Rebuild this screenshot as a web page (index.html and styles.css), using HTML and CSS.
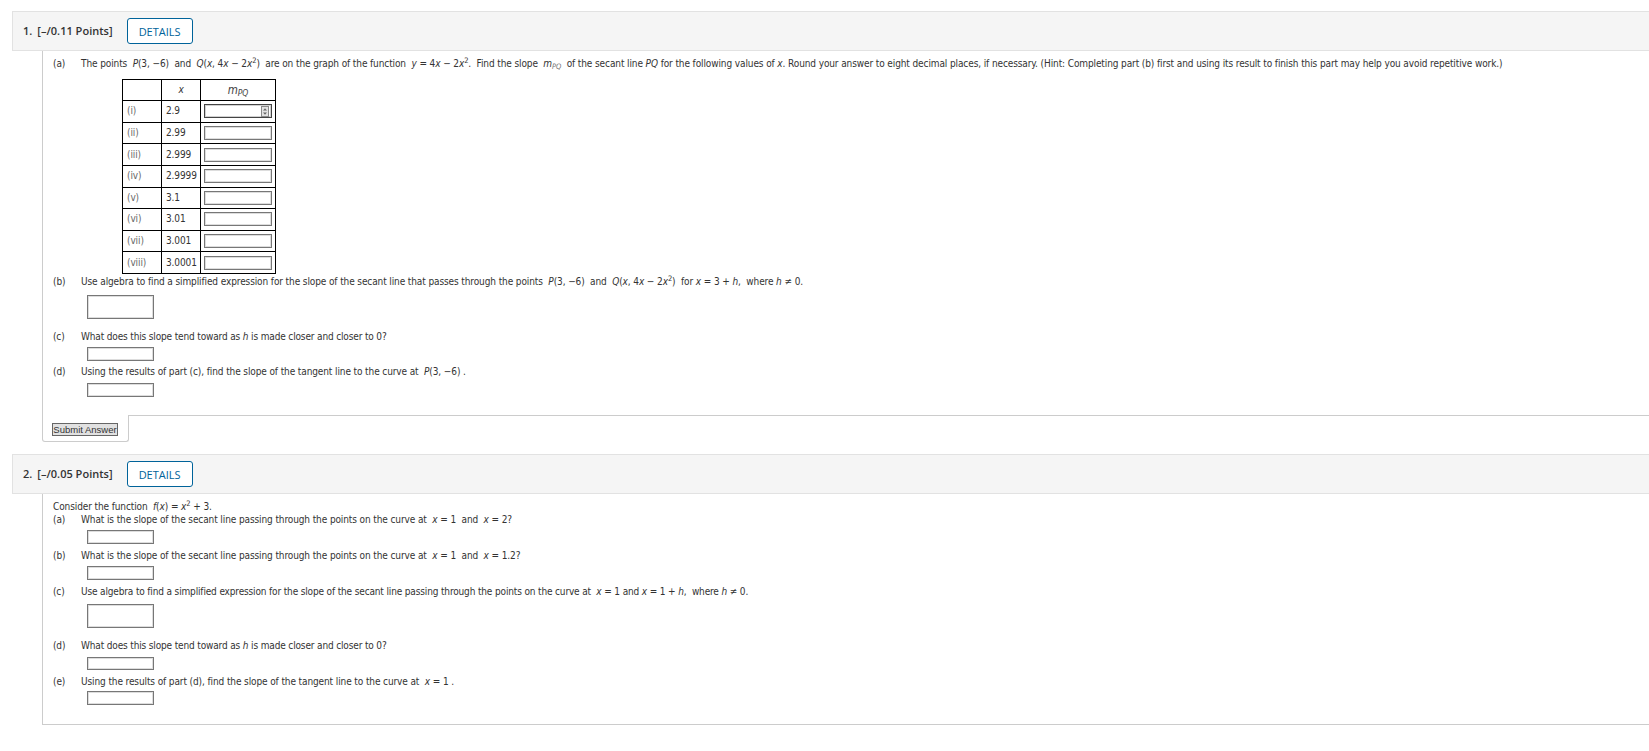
FILE: index.html
```html
<!DOCTYPE html>
<html lang="en">
<head>
<meta charset="utf-8">
<title>Questions</title>
<link rel="stylesheet" href="styles.css">
</head>
<body>
<section class="question q1">
  <header class="qhead"><span class="qnum">1.</span><span class="qpts">[–/0.11 Points]</span><button class="details">DETAILS</button></header>
  <div class="qbody">
    <div class="part"><span class="lab">(a)</span><span class="txt">The points&nbsp; <i>P</i>(3, −6)&nbsp; and&nbsp; <i>Q</i>(<i>x</i>, 4<i>x</i> − 2<i>x</i><sup>2</sup>)&nbsp; are on the graph of the function&nbsp; <i>y</i> = 4<i>x</i> − 2<i>x</i><sup>2</sup>.&nbsp; Find the slope&nbsp; <i>m</i><sub><i>PQ</i></sub>&nbsp; of the secant line <i>PQ</i> for the following values of <i>x</i>. Round your answer to eight decimal places, if necessary. (Hint: Completing part (b) first and using its result to finish this part may help you avoid repetitive work.)</span></div>
    <table class="vals">
      <tr><th class="c1"></th><th class="c2"><i>x</i></th><th class="c3"><i>m</i><sub><i>PQ</i></sub></th></tr>
      <tr><td class="rl">(i)</td><td>2.9</td><td><span class="spin"><input class="cell focus" type="text"><svg class="spin-ic" width="8" height="11" viewBox="0 0 8 11"><rect x=".5" y=".5" width="7" height="10" fill="#e4e4e4" stroke="#8a8a8a"/><path d="M4 2.2 6 4.6H2zM2 6.4h4L4 8.8z" fill="#666"/></svg></span></td></tr>
      <tr><td class="rl">(ii)</td><td>2.99</td><td><input class="cell" type="text"></td></tr>
      <tr><td class="rl">(iii)</td><td>2.999</td><td><input class="cell" type="text"></td></tr>
      <tr><td class="rl">(iv)</td><td>2.9999</td><td><input class="cell" type="text"></td></tr>
      <tr><td class="rl">(v)</td><td>3.1</td><td><input class="cell" type="text"></td></tr>
      <tr><td class="rl">(vi)</td><td>3.01</td><td><input class="cell" type="text"></td></tr>
      <tr><td class="rl">(vii)</td><td>3.001</td><td><input class="cell" type="text"></td></tr>
      <tr><td class="rl">(viii)</td><td>3.0001</td><td><input class="cell" type="text"></td></tr>
    </table>
    <div class="part"><span class="lab">(b)</span><span class="txt">Use algebra to find a simplified expression for the slope of the secant line that passes through the points&nbsp; <i>P</i>(3, −6)&nbsp; and&nbsp; <i>Q</i>(<i>x</i>, 4<i>x</i> − 2<i>x</i><sup>2</sup>)&nbsp; for <i>x</i> = 3 + <i>h</i>,&nbsp; where <i>h</i> ≠ 0.</span></div>
    <input class="ans tall a1b" type="text">
    <div class="part p1c tight"><span class="lab">(c)</span><span class="txt">What does this slope tend toward as <i>h</i> is made closer and closer to 0?</span></div>
    <input class="ans a1c" type="text">
    <div class="part p1d"><span class="lab">(d)</span><span class="txt">Using the results of part (c), find the slope of the tangent line to the curve at&nbsp; <i>P</i>(3, −6) .</span></div>
    <input class="ans a1d" type="text">
  </div>
  <div class="qfoot">
    <div class="submit-tab"><button class="submit">Submit Answer</button></div>
    <div class="foot-fill"></div>
  </div>
</section>
<section class="question q2">
  <header class="qhead"><span class="qnum">2.</span><span class="qpts">[–/0.05 Points]</span><button class="details">DETAILS</button></header>
  <div class="qbody closed">
    <div class="intro">Consider the function&nbsp; <i>f</i>(<i>x</i>) = <i>x</i><sup>2</sup> + 3.</div>
    <div class="part"><span class="lab">(a)</span><span class="txt">What is the slope of the secant line passing through the points on the curve at&nbsp; <i>x</i> = 1&nbsp; and&nbsp; <i>x</i> = 2?</span></div>
    <input class="ans gap4" type="text">
    <div class="part gap4"><span class="lab">(b)</span><span class="txt">What is the slope of the secant line passing through the points on the curve at&nbsp; <i>x</i> = 1&nbsp; and&nbsp; <i>x</i> = 1.2?</span></div>
    <input class="ans gap4" type="text">
    <div class="part gap4 tight"><span class="lab">(c)</span><span class="txt">Use algebra to find a simplified expression for the slope of the secant line passing through the points on the curve at&nbsp; <i>x</i> = 1 and <i>x</i> = 1 + <i>h</i>,&nbsp; where <i>h</i> ≠ 0.</span></div>
    <input class="ans tall a2c" type="text">
    <div class="part p1c tight"><span class="lab">(d)</span><span class="txt">What does this slope tend toward as <i>h</i> is made closer and closer to 0?</span></div>
    <input class="ans a2d" type="text">
    <div class="part gap4"><span class="lab">(e)</span><span class="txt">Using the results of part (d), find the slope of the tangent line to the curve at&nbsp; <i>x</i> = 1 .</span></div>
    <input class="ans a2e" type="text">
  </div>
</section>
</body>
</html>
```
FILE: styles.css
```css
html, body { margin: 0; padding: 0; background: #fff; overflow: hidden; }
body {
  padding: 11px 0 0 12px;
  font-family: "DejaVu Sans Condensed", "DejaVu Sans", sans-serif;
  font-stretch: condensed;
  font-size: 10px;
  letter-spacing: -0.11px;
  line-height: 14px;
  color: #333;
}
.question { display: block; }
.q2 { margin-top: 12px; }
.qhead {
  display: flex;
  align-items: center;
  box-sizing: border-box;
  height: 40px;
  padding-left: 10px;
  background: #f5f5f5;
  border: 1px solid #e2e2e2;
  border-right: 0;
  font-family: "Open Sans", sans-serif;
  font-stretch: normal;
  letter-spacing: 0;
  font-size: 11px;
  font-weight: 600;
  color: #333;
}
.qpts { margin-left: 5px; letter-spacing: 0.02px; }
.details {
  box-sizing: border-box;
  width: 66px;
  height: 26px;
  margin-left: 14px;
  padding: 0;
  background: #fff;
  border: 1px solid #00639a;
  border-radius: 3px;
  font-family: "Open Sans", sans-serif;
  font-size: 11px;
  font-weight: 400;
  color: #00639a;
}
.qbody {
  margin-left: 30px;
  padding: 5px 0 18px 10px;
  border-left: 1px solid #ccc;
}
.qbody.closed {
  padding-bottom: 19px;
  border-bottom: 1px solid #ccc;
}
.part {
  display: flex;
  white-space: nowrap;
  padding-top: 1px;
  margin-bottom: -1px;
}
.tight { letter-spacing: -0.15px; }
.lab { flex: 0 0 28px; width: 28px; }
i { font-style: italic; }
sup, sub { font-size: 7.5px; line-height: 0; }
sup { vertical-align: 4px; }
sub { vertical-align: -2px; color: #777; }
.vals {
  margin: 9px 0 0 69px;
  border-collapse: collapse;
  border: 1px solid #000;
}
.vals th, .vals td {
  box-sizing: border-box;
  padding: 0 0 0 4px;
  border: 1px solid #000;
  height: 21.625px;
  font-weight: 400;
  text-align: left;
  white-space: nowrap;
}
.vals th { height: 21px; text-align: center; padding: 0; }
.vals th.c3 { font-size: 11.5px; color: #444; }
.vals th.c3 sub { color: #444; font-size: 8.5px; }
.c1 { width: 39px; }
.c2 { width: 39px; }
.c3 { width: 75px; }
.rl { color: #6a6a6a; }
.vals td:last-child { padding: 0 0 0 3px; }
.cell, .ans {
  display: block;
  box-sizing: border-box;
  padding: 0;
  background: #fff;
  border: 1px solid #777;
  box-shadow: inset 0 0 0 1px rgba(120,120,120,.25);
  border-radius: 0;
  outline: none;
}
.cell { width: 68px; height: 14px; }
.cell.focus { border-color: #444; box-shadow: inset 0 0 0 1px rgba(70,70,70,.25); }
.spin { display: block; position: relative; width: 68px; }
.spin-ic { position: absolute; top: 2px; right: 3px; }
.ans { width: 67px; height: 14px; margin-left: 34px; }
.ans.tall { height: 24px; }
.a1b { margin-top: 7px; }
.p1c { margin-top: 10px; }
.a1c { margin-top: 4px; }
.p1d { margin-top: 3px; }
.a1d { margin-top: 5px; }
.qfoot { display: flex; margin-left: 30px; }
.submit-tab {
  box-sizing: border-box;
  width: 87px;
  height: 27px;
  padding: 8px 0 0 9px;
  border: 1px solid #ccc;
  border-top: 0;
  border-radius: 0 0 3px 3px;
}
.foot-fill { flex: 1; border-top: 1px solid #ccc; }
.submit {
  display: block;
  box-sizing: border-box;
  width: 66px;
  height: 13px;
  padding: 0;
  background: #e1e1e1;
  border: 1px solid #666;
  border-radius: 0;
  font-family: "Liberation Sans", sans-serif;
  font-size: 9.5px;
  letter-spacing: 0;
  line-height: 11px;
  white-space: nowrap;
  color: #333;
}
.intro { white-space: nowrap; line-height: 13px; padding-top: 1px; margin-bottom: -1px; }
.gap4 { margin-top: 4px; }
.a2c { margin-top: 6px; }
.a2d { margin-top: 5px; height: 13px; }
.a2e { margin-top: 3px; }
```
